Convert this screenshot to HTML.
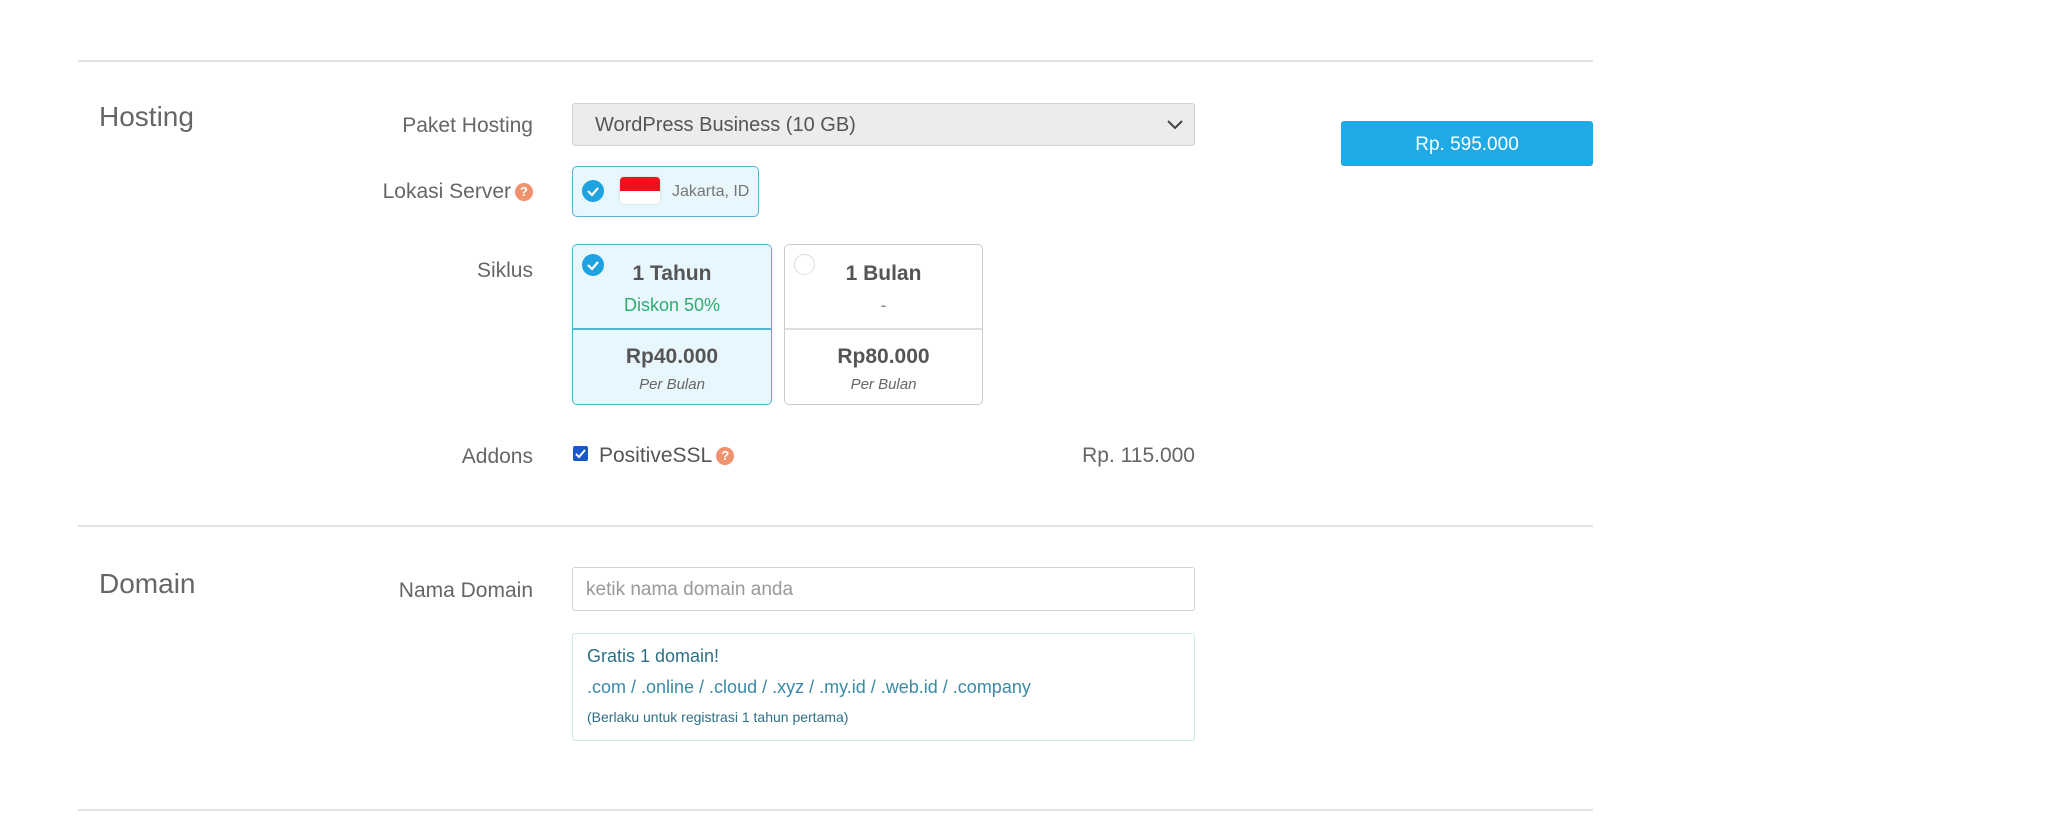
<!DOCTYPE html>
<html><head><meta charset="utf-8"><style>
*{box-sizing:border-box;margin:0;padding:0}
body{width:2048px;height:824px;background:#fff;font-family:"Liberation Sans",sans-serif;color:#555;position:relative;overflow:hidden}
.a{position:absolute}
.hr{position:absolute;left:78px;width:1515px;height:2px;background:#e2e2e2}
.sec{font-size:28px;color:#666;left:99px}
.lbl{font-size:21px;color:#666;right:1515px;text-align:right;white-space:nowrap;transform:translateY(-50%)}
.q{display:inline-block;width:18px;height:18px;border-radius:50%;background:#f0926d;color:#fff;font-size:13px;font-weight:bold;text-align:center;line-height:18px;vertical-align:2px;margin-left:4px}
.chk{width:22px;height:22px;border-radius:50%;background:#1ea2e0;}
.chk svg{display:block}
.card{border:1.5px solid #ccc;border-radius:5px;background:#fff}
.card.on{border-color:#56b4d3;background:#e8f6fd}
.c{position:absolute;left:0;right:0;text-align:center}
</style></head><body>
<div class="hr" style="top:60px"></div>
<div class="hr" style="top:525px"></div>
<div class="hr" style="top:809px"></div>

<div class="a sec" style="top:101px">Hosting</div>
<div class="a lbl" style="top:126px">Paket Hosting</div>
<div class="a" style="left:572px;top:103px;width:623px;height:43px;background:#ececec;border:1.5px solid #d2d2d2;border-radius:3px;font-size:20px;color:#555;line-height:42px;padding-left:22px">WordPress Business (10 GB)
<svg class="a" style="right:10px;top:13px" width="18" height="14" viewBox="0 0 18 14"><path d="M2 4l7 7 7-7" fill="none" stroke="#444" stroke-width="2"/></svg></div>
<div class="a" style="left:1341px;top:121px;width:252px;height:45px;background:#1eaae7;border-radius:3px;color:#fff;font-size:19px;text-align:center;line-height:47px">Rp. 595.000</div>

<div class="a lbl" style="top:192px">Lokasi Server<span class="q">?</span></div>
<div class="a card on" style="left:572px;top:166px;width:187px;height:51px">
 <div class="a chk" style="left:9px;top:13px"><svg width="22" height="22"><path d="M6 11l4 4 6-7" fill="none" stroke="#fff" stroke-width="2.2"/></svg></div>
 <div class="a" style="left:47px;top:10px;width:40px;height:27px;border-radius:4px;overflow:hidden;box-shadow:0 0 2px #ccc"><div style="height:50%;background:#f0101e"></div><div style="height:50%;background:#fff"></div></div>
 <div class="a" style="left:99px;top:16px;font-size:16px;color:#777">Jakarta, ID</div>
</div>

<div class="a lbl" style="top:271px">Siklus</div>
<div class="a card on" style="left:572px;top:244px;width:200px;height:161px">
 <div class="a chk" style="left:9px;top:9px"><svg width="22" height="22"><path d="M6 11l4 4 6-7" fill="none" stroke="#fff" stroke-width="2.2"/></svg></div>
 <div class="c" style="top:17px;font-size:21px;font-weight:bold;color:#555">1 Tahun</div>
 <div class="c" style="top:50px;font-size:18px;color:#2fae6e">Diskon 50%</div>
 <div class="a" style="left:0;right:0;top:83px;height:1.5px;background:#56b4d3"></div>
 <div class="c" style="top:100px;font-size:21px;font-weight:bold;color:#555">Rp40.000</div>
 <div class="c" style="top:131px;font-size:15px;font-style:italic;color:#666">Per Bulan</div>
</div>
<div class="a card" style="left:784px;top:244px;width:199px;height:161px">
 <div class="a" style="left:9px;top:9px;width:21px;height:21px;border-radius:50%;border:1.5px solid #ddd"></div>
 <div class="c" style="top:17px;font-size:21px;font-weight:bold;color:#555">1 Bulan</div>
 <div class="c" style="top:50px;font-size:18px;color:#888">-</div>
 <div class="a" style="left:0;right:0;top:83px;height:1.5px;background:#ddd"></div>
 <div class="c" style="top:100px;font-size:21px;font-weight:bold;color:#555">Rp80.000</div>
 <div class="c" style="top:131px;font-size:15px;font-style:italic;color:#666">Per Bulan</div>
</div>

<div class="a lbl" style="top:457px">Addons</div>
<div class="a" style="left:573px;top:446px;width:15px;height:15px;background:#1659c7;border-radius:2px"><svg width="15" height="15"><path d="M3 8l3 3 6-7" fill="none" stroke="#fff" stroke-width="2"/></svg></div>
<div class="a" style="left:599px;top:444px;font-size:21px;color:#555">PositiveSSL<span class="q">?</span></div>
<div class="a" style="right:853px;top:444px;font-size:21px;color:#666">Rp. 115.000</div>

<div class="a sec" style="top:568px">Domain</div>
<div class="a lbl" style="top:591px">Nama Domain</div>
<div class="a" style="left:572px;top:567px;width:623px;height:44px;border:1.5px solid #d2d2d2;border-radius:3px;font-size:19px;color:#999;line-height:43px;padding-left:13px">ketik nama domain anda</div>
<div class="a" style="left:572px;top:633px;width:623px;height:108px;border:1.5px solid #cde9ee;border-radius:3px;background:#fff">
 <div class="a" style="left:14px;top:12px;font-size:18px;color:#2e6f86">Gratis 1 domain!</div>
 <div class="a" style="left:14px;top:43px;font-size:18px;color:#3a89a6">.com / .online / .cloud / .xyz / .my.id / .web.id / .company</div>
 <div class="a" style="left:14px;top:75px;font-size:14px;color:#2e6f86">(Berlaku untuk registrasi 1 tahun pertama)</div>
</div>
</body></html>
